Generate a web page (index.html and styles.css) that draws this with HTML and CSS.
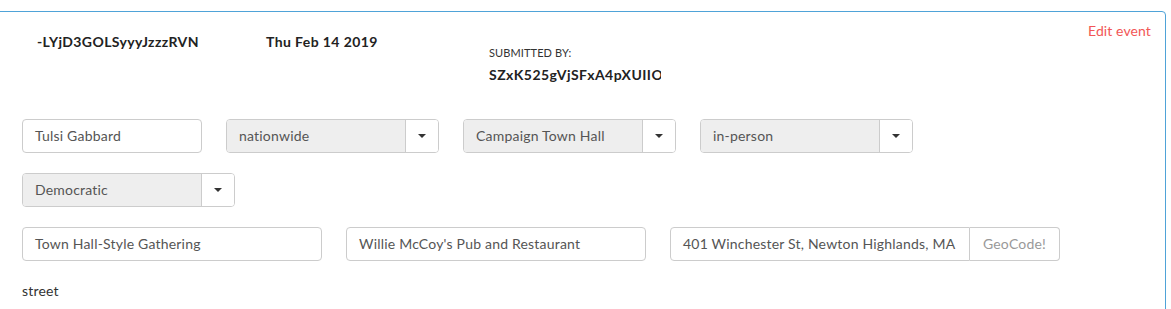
FILE: index.html
```html
<!DOCTYPE html>
<html>
<head>
<meta charset="utf-8">
<link rel="stylesheet" href="styles.css">
</head>
<body>
<div class="card">
  <div class="header">
    <div class="col-id"><span class="strong">-LYjD3GOLSyyyJzzzRVN</span></div>
    <div class="col-date"><span class="strong">Thu Feb 14 2019</span></div>
    <div class="col-sub">
      <div class="sub-label">SUBMITTED BY:</div>
      <div class="sub-id strong">SZxK525gVjSFxA4pXUIIOcQ2tq</div>
    </div>
    <a class="edit">Edit event</a>
  </div>
  <div class="rows">
    <div class="row">
      <div class="field w180">Tulsi Gabbard</div>
      <div class="select"><div class="sel-val">nationwide</div><div class="sel-btn"><span class="caret"></span></div></div>
      <div class="select"><div class="sel-val">Campaign Town Hall</div><div class="sel-btn"><span class="caret"></span></div></div>
      <div class="select"><div class="sel-val">in-person</div><div class="sel-btn"><span class="caret"></span></div></div>
    </div>
    <div class="row">
      <div class="select"><div class="sel-val">Democratic</div><div class="sel-btn"><span class="caret"></span></div></div>
    </div>
    <div class="row">
      <div class="field w300">Town Hall-Style Gathering</div>
      <div class="field w300">Willie McCoy's Pub and Restaurant</div>
      <div class="group">
        <div class="field w300 left">401 Winchester St, Newton Highlands, MA</div>
        <div class="addon">GeoCode!</div>
      </div>
    </div>
  </div>
  <div class="street">street</div>
</div>
</body>
</html>
```
FILE: styles.css
```css
html, body {
  margin: 0;
  padding: 0;
  background: #fff;
  overflow: hidden;
}
body {
  font-family: Lato, "Open Sans", sans-serif;
  font-size: 14px;
  color: #333;
  line-height: 20px;
  letter-spacing: 0.2px;
}
.card {
  margin: 11px 5px 0 -10px;
  border: 1px solid #4fa3d8;
  border-radius: 4px;
  padding: 6px 14px 40px 31px;
  height: 400px;
}
.header {
  display: flex;
  align-items: flex-start;
}
.strong {
  font-weight: 700;
  color: #222;
  font-size: 14px;
  letter-spacing: 0.4px;
}
.col-id {
  width: 229px;
  margin-left: 15px;
  margin-top: 14px;
}
.col-date {
  width: 223px;
  margin-top: 14px;
}
.col-sub {
  margin-top: 27px;
  width: 172px;
  overflow: hidden;
  white-space: nowrap;
}
.sub-label {
  font-size: 11px;
  line-height: 15px;
  color: #333;
  letter-spacing: 0.1px;
}
.sub-id {
  display: block;
  margin-top: 5px;
  font-size: 14px;
  letter-spacing: 0.45px;
}
.edit {
  margin-left: auto;
  margin-top: 3px;
  color: #f25656;
  font-size: 14px;
  letter-spacing: 0.1px;
}
.rows {
  margin-top: 34px;
  display: flex;
  flex-direction: column;
  gap: 20px;
}
.row {
  display: flex;
  gap: 24px;
}
.field {
  height: 34px;
  box-sizing: border-box;
  border: 1px solid #ccc;
  border-radius: 4px;
  padding: 6px 12px;
  color: #555;
  background: #fff;
  white-space: nowrap;
  overflow: hidden;
}
.w180 { width: 180px; }
.w300 { width: 300px; }
.select {
  display: flex;
  width: 213px;
  height: 34px;
  box-sizing: border-box;
  border: 1px solid #ccc;
  border-radius: 4px;
  overflow: hidden;
}
.sel-val {
  flex: 1;
  background: #eee;
  color: #555;
  padding: 6px 12px;
  border-right: 1px solid #ccc;
}
.sel-btn {
  width: 32px;
  background: #fff;
  display: flex;
  align-items: center;
  justify-content: center;
}
.caret {
  width: 0;
  height: 0;
  border-left: 4px solid transparent;
  border-right: 4px solid transparent;
  border-top: 4px solid #333;
}
.group {
  display: flex;
}
.field.left {
  border-radius: 4px 0 0 4px;
}
.addon {
  width: 90px;
  height: 34px;
  box-sizing: border-box;
  border: 1px solid #ccc;
  border-left: 0;
  border-radius: 0 4px 4px 0;
  padding: 6px 12px;
  color: #999;
  text-align: center;
}
.street {
  margin-top: 20px;
  margin-left: 0;
}
```
